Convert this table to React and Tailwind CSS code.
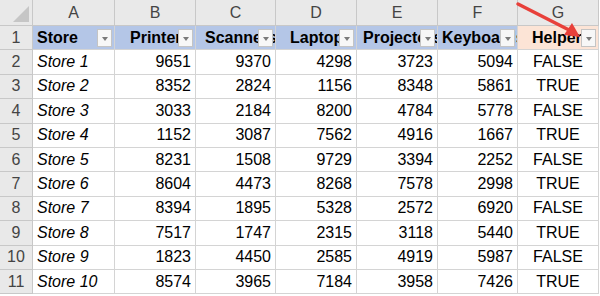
const cols = ['A', 'B', 'C', 'D', 'E', 'F', 'G']
const headers = [
  { label: 'Store', pad: 'pl-[4px] bg-[#b4c6e7]' },
  { label: 'Printers', pad: 'pl-[15px] bg-[#b4c6e7]' },
  { label: 'Scanners', pad: 'pl-[9px] bg-[#b4c6e7]' },
  { label: 'Laptops', pad: 'pl-[14px] bg-[#b4c6e7]' },
  { label: 'Projectors', pad: 'pl-[6px] bg-[#b4c6e7]' },
  { label: 'Keyboards', pad: 'pl-[4px] bg-[#b4c6e7]' },
  { label: 'Helper', pad: 'pl-[14px] bg-[#fce4d6]' },
]

const rows = [
  ['Store 1', 9651, 9370, 4298, 3723, 5094, 'FALSE'],
  ['Store 2', 8352, 2824, 1156, 8348, 5861, 'TRUE'],
  ['Store 3', 3033, 2184, 8200, 4784, 5778, 'FALSE'],
  ['Store 4', 1152, 3087, 7562, 4916, 1667, 'TRUE'],
  ['Store 5', 8231, 1508, 9729, 3394, 2252, 'FALSE'],
  ['Store 6', 8604, 4473, 8268, 7578, 2998, 'TRUE'],
  ['Store 7', 8394, 1895, 5328, 2572, 6920, 'FALSE'],
  ['Store 8', 7517, 1747, 2315, 3118, 5440, 'TRUE'],
  ['Store 9', 1823, 4450, 2585, 4919, 5987, 'FALSE'],
  ['Store 10', 8574, 3965, 7184, 3958, 7426, 'TRUE'],
]

function FilterButton() {
  return (
    <span className="absolute right-[2px] top-[3px] flex h-[18px] w-[15px] items-center justify-center border border-[#c4c4c4] bg-[#f7f7f7]">
      <span className="mt-[1px] h-0 w-0 border-x-[3.5px] border-t-[4px] border-x-transparent border-t-[#7a7a7a]" />
    </span>
  )
}

export default function App() {
  return (
    <div className="relative h-[296px] w-[600px] overflow-hidden bg-white font-['Liberation_Sans',Arial,sans-serif] text-[16px] text-black">
      <div className="grid grid-cols-[33px_82px_81px_80px_81px_81px_80px_81px] grid-rows-[26px_repeat(11,24.4px)]">
        <div className="relative border-b border-r border-[#c8c8c8] bg-[#e9e9e9]">
          <svg className="absolute bottom-[3px] right-[3px]" width="16" height="16" viewBox="0 0 16 16">
            <polygon points="16,0 16,16 0,16" fill="#c6c6c6" />
          </svg>
        </div>
        {cols.map((c) => (
          <div key={c} className="flex items-center justify-center border-b border-r border-[#c8c8c8] bg-[#e9e9e9] text-[#444]">
            {c}
          </div>
        ))}

        <div className="flex items-center justify-center border-b border-r border-[#c8c8c8] bg-[#e9e9e9] text-[#444]">1</div>
        {headers.map((h) => (
          <div
            key={h.label}
            className={`relative flex items-center overflow-hidden whitespace-nowrap border-b border-r border-[#d4d4d4] font-bold ${h.pad}`}
          >
            {h.label}
            <FilterButton />
          </div>
        ))}

        {rows.map((r, ri) => (
          <div key={ri} className="contents">
            <div className="flex items-center justify-center border-b border-r border-[#c8c8c8] bg-[#e9e9e9] text-[#444]">
              {ri + 2}
            </div>
            {r.map((v, ci) => (
              <div
                key={ci}
                className={`flex items-center overflow-hidden whitespace-nowrap border-b border-r border-[#d4d4d4] ${
                  ci === 0 ? 'pl-[4px] italic' : ci === 6 ? 'justify-center' : 'justify-end pr-[4px]'
                }`}
              >
                {v}
              </div>
            ))}
          </div>
        ))}
      </div>

      <svg className="absolute left-0 top-0" width="600" height="296" viewBox="0 0 600 296">
        <line x1="518" y1="4" x2="571" y2="31" stroke="#e8403a" strokeWidth="3.5" strokeLinecap="round" />
        <polygon points="580,37 564,35 572,23" fill="#e8403a" />
      </svg>
    </div>
  )
}
